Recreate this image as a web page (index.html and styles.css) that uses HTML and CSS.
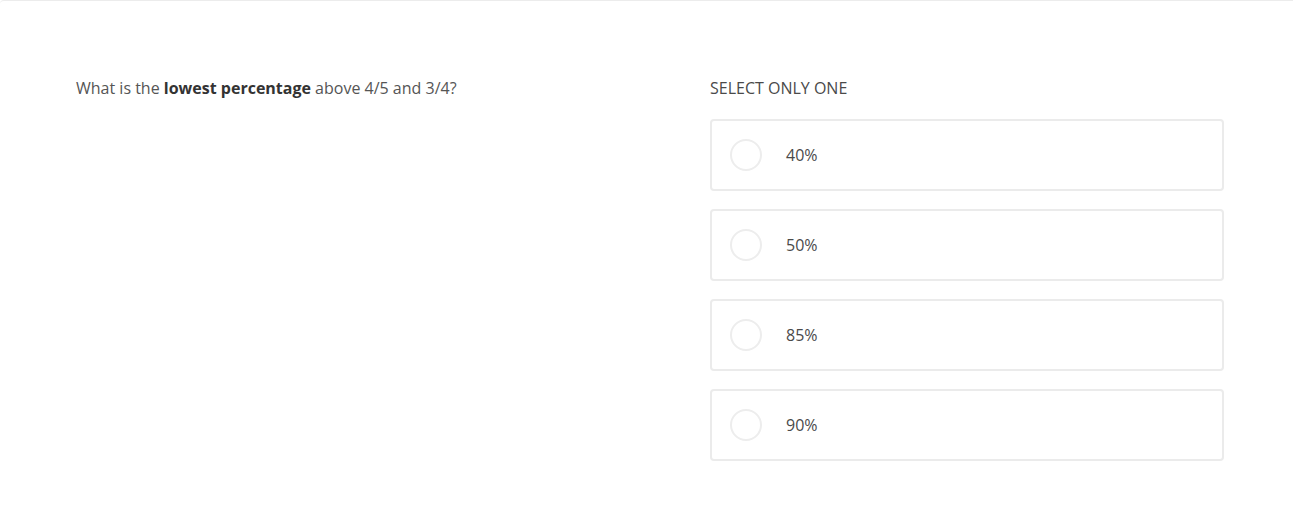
FILE: index.html
```html
<!DOCTYPE html>
<html>
<head>
<meta charset="utf-8">
<link rel="stylesheet" href="styles.css">
</head>
<body>
<div class="frame">
  <div class="question-layout">
    <div class="prompt">What is the <strong>lowest percentage</strong> above 4/5 and 3/4?</div>
    <div class="answers">
      <div class="instruction">SELECT ONLY ONE</div>
      <div class="options">
        <div class="option"><span class="radio"></span><span class="label">40%</span></div>
        <div class="option"><span class="radio"></span><span class="label">50%</span></div>
        <div class="option"><span class="radio"></span><span class="label">85%</span></div>
        <div class="option"><span class="radio"></span><span class="label">90%</span></div>
      </div>
    </div>
  </div>
</div>
</body>
</html>
```
FILE: styles.css
```css
html, body {
  margin: 0;
  padding: 0;
  background: #fff;
}
body {
  font-family: "Open Sans", "Liberation Sans", sans-serif;
  font-size: 16px;
  line-height: 24px;
  color: #555;
}
.frame {
  border-top: 1px solid #ececec;
  border-top-left-radius: 4px;
  height: 523px;
  box-sizing: border-box;
}
.question-layout {
  display: grid;
  grid-template-columns: 1fr 514px;
  padding: 75px 69px 0 76px;
}
.prompt strong {
  font-weight: 700;
  color: #333;
}
.instruction {
  color: #4a4a4a;
  margin-bottom: 19px;
}
.options {
  display: flex;
  flex-direction: column;
  gap: 18px;
}
.option {
  display: flex;
  align-items: center;
  height: 72px;
  box-sizing: border-box;
  border: 2px solid #ebebeb;
  border-radius: 4px;
  padding-left: 18px;
}
.radio {
  width: 32px;
  height: 32px;
  box-sizing: border-box;
  border: 2px solid #ededed;
  border-radius: 50%;
  flex: none;
}
.label {
  margin-left: 24px;
  color: #4a4a4a;
}
```
